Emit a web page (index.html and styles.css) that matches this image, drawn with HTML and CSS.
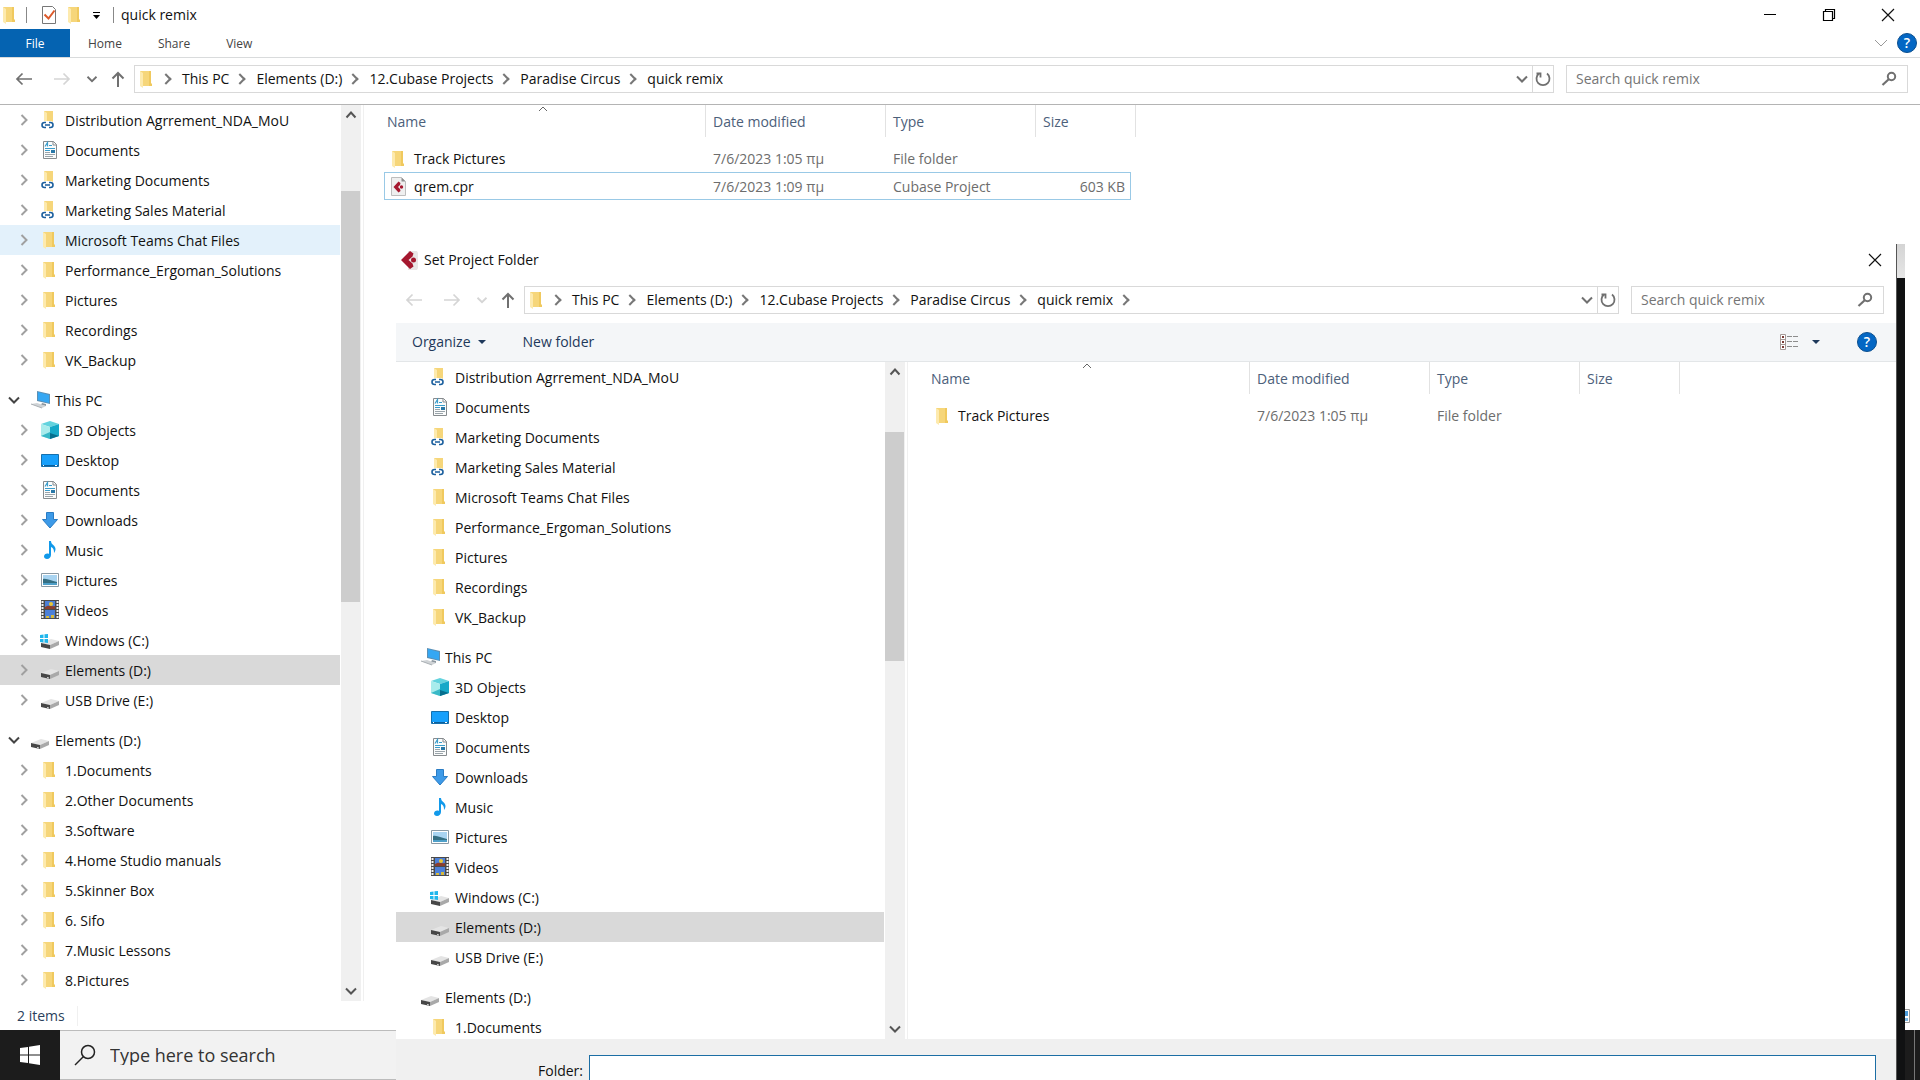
FILE: index.html
```html
<!DOCTYPE html>
<html lang="en">
<head>
    <meta charset="UTF-8">
    <meta name="viewport" content="width=device-width, initial-scale=1.0">
    <title>quick remix</title>
    <link rel="stylesheet" href="styles.css">
</head>
<body>

    <!-- Icon set -->
    <svg class="sprite" aria-hidden="true">
        <symbol id="i-folder" viewBox="0 0 20 20">
            <path d="M3 2h11v13l1 1v1H6L3 16z" fill="#f6d67a"/>
            <path d="M3 2l3 2v15l-3-2z" fill="#fdeaae"/>
            <path d="M12 2h2v12l1 1v2h-3z" fill="#f0c95e"/>
        </symbol>
        <symbol id="i-shared" viewBox="0 0 20 20">
            <path d="M4 1h9v15H4z" fill="#f6d67a"/>
            <path d="M4 1l3 2v14H4z" fill="#fdeaae"/>
            <rect x="1" y="11" width="13" height="8" rx="4" fill="#fff"/>
            <path d="M6 12.500H4.500a2.500 2.500 0 0 0 0 5H6M9 12.500h1.500a2.500 2.500 0 0 1 0 5H9M5 15h5" fill="none" stroke="#1b5f9e" stroke-width="1.600"/>
        </symbol>
        <symbol id="i-document" viewBox="0 0 20 20">
            <path d="M3.500 1.500h10l3 3v14h-13z" fill="#fbfcfc" stroke="#868b8e"/>
            <path d="M13 1.500V5h3.500" fill="none" stroke="#868b8e"/>
            <path d="M5 6.500l2.500-4v4M9 5.500h3M5 8.500h10M5 10.500h5" fill="none" stroke="#3a9ccb" stroke-width="1.200"/>
            <path d="M5 12.500h5M5 14.500h10M5 16.500h8" stroke="#9aa4aa"/>
            <path d="M11 10h4v3h-4z" fill="#2878a8"/>
        </symbol>
        <symbol id="i-pc" viewBox="0 0 20 20">
            <path d="M7 1l13 3v10L7 11z" fill="#5c8fb3"/>
            <path d="M8 2l11 3v8L8 10z" fill="#35a7f3"/>
            <path d="M12 13l4 1v2l-5-1z" fill="#8b969e"/>
            <path d="M1 14l6-1 9 3-4 2z" fill="#cfd3d6"/>
            <path d="M1 14l11 4" stroke="#aab0b4"/>
        </symbol>
        <symbol id="i-cube" viewBox="0 0 20 20">
            <path d="M10 1l9 3-9 3-9-3z" fill="#63d3de"/>
            <path d="M1 4l9 3v12l-9-3z" fill="#a9ecec"/>
            <path d="M10 7l9-3v12l-9 3z" fill="#16a9c8"/>
            <path d="M1 16l9-4v7z" fill="#39b9c7"/>
            <path d="M10 13l9 3-9 3z" fill="#066f8e"/>
        </symbol>
        <symbol id="i-desktop" viewBox="0 0 20 20">
            <path d="M1.500 4.500h17v12h-17z" fill="#18a0fb" stroke="#1670ad"/>
            <path d="M2 15.500h16" stroke="#0c5f9b"/>
            <path d="M3 15.500h1M15 15.500h2" stroke="#fff"/>
        </symbol>
        <symbol id="i-download" viewBox="0 0 20 20">
            <path d="M6.500 2.500h7v7h4L10 18 2.500 9.500h4z" fill="#3d9ae8" stroke="#2a7cc4"/>
        </symbol>
        <symbol id="i-music" viewBox="0 0 20 20">
            <path d="M9 1h2c0 4 4.500 4 4.500 8 0 1.500-.5 2.500-1.500 4 .3-3.500-1-5-3-6v8c0 2-1.700 4-4 4-1.700 0-3-1-3-2.500C4 14 7 13 9 14z" fill="#1199ea"/>
        </symbol>
        <symbol id="i-picture" viewBox="0 0 20 20">
            <path d="M1.500 3.500h17v13h-17z" fill="#fff" stroke="#8a9aa5"/>
            <path d="M3 5h14v10H3z" fill="#a9d4f1"/>
            <path d="M3 9c4-1 8 2 14 3v3H3z" fill="#356f83"/>
            <path d="M3 13h14v2H3z" fill="#4fa0c9"/>
        </symbol>
        <symbol id="i-video" viewBox="0 0 20 20">
            <path d="M1 0h18v19H1z" fill="#4a4a4a"/>
            <path d="M2.500 1v18M17.500 1v18" stroke="#f2f2f2" stroke-width="2" stroke-dasharray="2 1"/>
            <path d="M5 1h10v8H5zM5 10h10v8H5z" fill="#4c80d8"/>
            <path d="M5 7c4-3 7 0 10-1v3H5z" fill="#8a3d2e"/>
            <circle cx="11" cy="4" r="2" fill="#e8c736"/>
            <path d="M6 16h3v2H6zM11 15h3v3h-3z" fill="#d8b93a"/>
        </symbol>
        <symbol id="i-drive" viewBox="0 0 20 20">
            <path d="M1 13l10-4 8 2-9 4z" fill="#e4e4e4"/>
            <path d="M1 13l9 2v4l-9-2z" fill="#474747"/>
            <path d="M10 15l9-4v4l-9 4z" fill="#a9a9a9"/>
            <path d="M7 17.500l2 .5" stroke="#ddd"/>
        </symbol>
        <symbol id="i-drive-c" viewBox="0 0 20 20">
            <path d="M1 13l10-4 8 2-9 4z" fill="#e4e4e4"/>
            <path d="M1 13l9 2v4l-9-2z" fill="#474747"/>
            <path d="M10 15l9-4v4l-9 4z" fill="#a9a9a9"/>
            <path d="M0 5l3.500-.5V8H0zM4.500 4.300L8 4v4H4.500zM0 9h3.500v3.500L0 12zM4.500 9H8v4l-3.500-.4z" fill="#1fb6ec"/>
        </symbol>
        <symbol id="i-cubase" viewBox="0 0 20 20">
            <path d="M9 1h9l1 2v15l-1 2H9z" fill="#e9e6e6"/>
            <path d="M11 1l3.500 2.500-1 3L9.500 10l4 3.500 1 3L11 19 2 10z" fill="#a5182f"/>
            <circle cx="14.500" cy="10" r="2.500" fill="#a5182f"/>
        </symbol>
        <symbol id="i-cpr" viewBox="0 0 20 20">
            <path d="M2.500.5h10l4 4v14h-14z" fill="#efefef" stroke="#bdbdbd"/>
            <path d="M12.500.5v4h4z" fill="#8d8d8d"/>
            <path d="M9.500 4.500l2 1.500-.5 2-2 2 2 2 .5 2-2 1.500-5-5.500z" fill="#a5182f"/>
            <circle cx="12.500" cy="10" r="1.700" fill="#a5182f"/>
        </symbol>
        <symbol id="i-properties" viewBox="0 0 20 20">
            <path d="M3.500 1.500h10l3 3v14h-13z" fill="#fff" stroke="#777"/>
            <path d="M5.500 9.500l4 4 6-8" fill="none" stroke="#dc5a2b" stroke-width="2"/>
        </symbol>
        <symbol id="i-right" viewBox="0 0 20 20">
            <path d="M7.500 5l5 5-5 5" fill="none" stroke="currentColor" stroke-width="2"/>
        </symbol>
        <symbol id="i-down" viewBox="0 0 20 20">
            <path d="M5 7.500l5 5 5-5" fill="none" stroke="currentColor" stroke-width="2"/>
        </symbol>
        <symbol id="i-up" viewBox="0 0 20 20">
            <path d="M5.500 12.500l4.500-5 4.500 5" fill="none" stroke="currentColor" stroke-width="2"/>
        </symbol>
        <symbol id="i-thin-down" viewBox="0 0 20 20">
            <path d="M4 7l6 6 6-6" fill="none" stroke="currentColor"/>
        </symbol>
        <symbol id="i-arrow-left" viewBox="0 0 20 20">
            <path d="M18 10H3M8.500 4.500L3 10l5.500 5.500" fill="none" stroke="currentColor" stroke-width="1.700"/>
        </symbol>
        <symbol id="i-arrow-right" viewBox="0 0 20 20">
            <path d="M2 10h15M11.500 4.500L17 10l-5.500 5.500" fill="none" stroke="currentColor" stroke-width="1.700"/>
        </symbol>
        <symbol id="i-arrow-up" viewBox="0 0 20 20">
            <path d="M10 18V4M4.500 9.500L10 4l5.500 5.500" fill="none" stroke="currentColor" stroke-width="2"/>
        </symbol>
        <symbol id="i-refresh" viewBox="0 0 20 20">
            <path d="M14 4.500A6.500 6.500 0 1 1 6 4.500M3.500 4.500h4v4" fill="none" stroke="currentColor" stroke-width="1.800"/>
        </symbol>
        <symbol id="i-search" viewBox="0 0 20 20">
            <circle cx="12.500" cy="7.500" r="3.700" fill="none" stroke="currentColor" stroke-width="2"/>
            <path d="M10 10l-6.500 6" stroke="currentColor" stroke-width="2.200"/>
        </symbol>
        <symbol id="i-triangle" viewBox="0 0 10 10">
            <path d="M1 3h8L5 7z" fill="currentColor"/>
        </symbol>
        <symbol id="i-close" viewBox="0 0 20 20">
            <path d="M4 4l12 12M16 4L4 16" stroke="currentColor" stroke-width="1.200"/>
        </symbol>
    </svg>

    <!-- Explorer window -->
    <main class="explorer">
        <header class="titlebar">
            <svg class="icon"><use href="#i-folder"/></svg>
            <span class="divider"></span>
            <button class="tool" aria-label="Properties"><svg class="icon"><use href="#i-properties"/></svg></button>
            <button class="tool" aria-label="New folder"><svg class="icon"><use href="#i-folder"/></svg></button>
            <button class="tool" aria-label="Customize toolbar"><svg class="icon narrow" viewBox="5 0 10 20"><path d="M7 7.500h7" stroke="#000"/><path d="M7 10h7l-3.500 4z"/></svg></button>
            <span class="divider"></span>
            <span class="window-name">quick remix</span>
            <div class="window-buttons">
                <button aria-label="Minimize"><svg class="icon" viewBox="0 0 20 20"><path d="M4 9.500h12" stroke="#000"/></svg></button>
                <button aria-label="Restore"><svg class="icon" viewBox="0 0 20 20"><path d="M4.500 6.500h9v9h-9zM6.500 6V4.500h9v9H14" fill="none" stroke="#000" stroke-width="1.200"/></svg></button>
                <button aria-label="Close"><svg class="icon"><use href="#i-close"/></svg></button>
            </div>
        </header>

        <nav class="ribbon">
            <button class="tab file">File</button>
            <button class="tab">Home</button>
            <button class="tab">Share</button>
            <button class="tab">View</button>
            <button class="expand" aria-label="Expand the ribbon"><svg class="icon"><use href="#i-thin-down"/></svg></button>
            <button class="help" aria-label="Help">?</button>
        </nav>

        <div class="navbar">
            <button class="nav-back" aria-label="Back"><svg class="icon"><use href="#i-arrow-left"/></svg></button>
            <button class="nav-forward off" aria-label="Forward"><svg class="icon"><use href="#i-arrow-right"/></svg></button>
            <button class="nav-recent" aria-label="Recent locations"><svg class="icon small"><use href="#i-down"/></svg></button>
            <button class="nav-up" aria-label="Up"><svg class="icon"><use href="#i-arrow-up"/></svg></button>
            <div class="address">
                <svg class="icon"><use href="#i-folder"/></svg>
                <ol class="crumbs">
                    <li><a href="#">This PC</a></li>
                    <li><a href="#">Elements (D:)</a></li>
                    <li><a href="#">12.Cubase Projects</a></li>
                    <li><a href="#">Paradise Circus</a></li>
                    <li><a href="#">quick remix</a></li>
                </ol>
                <button aria-label="Previous locations"><svg class="icon"><use href="#i-down"/></svg></button>
                <button class="refresh" aria-label="Refresh"><svg class="icon"><use href="#i-refresh"/></svg></button>
            </div>
            <div class="search">
                <input type="text" placeholder="Search quick remix" aria-label="Search quick remix">
                <svg class="icon"><use href="#i-search"/></svg>
            </div>
        </div>

        <div class="panes">
            <ul class="tree">
                <li><button class="twist" aria-label="Expand"><svg class="icon"><use href="#i-right"/></svg></button><svg class="icon"><use href="#i-shared"/></svg><span>Distribution Agrrement_NDA_MoU</span></li>
                <li><button class="twist" aria-label="Expand"><svg class="icon"><use href="#i-right"/></svg></button><svg class="icon"><use href="#i-document"/></svg><span>Documents</span></li>
                <li><button class="twist" aria-label="Expand"><svg class="icon"><use href="#i-right"/></svg></button><svg class="icon"><use href="#i-shared"/></svg><span>Marketing Documents</span></li>
                <li><button class="twist" aria-label="Expand"><svg class="icon"><use href="#i-right"/></svg></button><svg class="icon"><use href="#i-shared"/></svg><span>Marketing Sales Material</span></li>
                <li class="hover"><button class="twist" aria-label="Expand"><svg class="icon"><use href="#i-right"/></svg></button><svg class="icon"><use href="#i-folder"/></svg><span>Microsoft Teams Chat Files</span></li>
                <li><button class="twist" aria-label="Expand"><svg class="icon"><use href="#i-right"/></svg></button><svg class="icon"><use href="#i-folder"/></svg><span>Performance_Ergoman_Solutions</span></li>
                <li><button class="twist" aria-label="Expand"><svg class="icon"><use href="#i-right"/></svg></button><svg class="icon"><use href="#i-folder"/></svg><span>Pictures</span></li>
                <li><button class="twist" aria-label="Expand"><svg class="icon"><use href="#i-right"/></svg></button><svg class="icon"><use href="#i-folder"/></svg><span>Recordings</span></li>
                <li><button class="twist" aria-label="Expand"><svg class="icon"><use href="#i-right"/></svg></button><svg class="icon"><use href="#i-folder"/></svg><span>VK_Backup</span></li>
                <li class="root"><button class="twist" aria-label="Collapse"><svg class="icon"><use href="#i-down"/></svg></button><svg class="icon"><use href="#i-pc"/></svg><span>This PC</span></li>
                <li><button class="twist" aria-label="Expand"><svg class="icon"><use href="#i-right"/></svg></button><svg class="icon"><use href="#i-cube"/></svg><span>3D Objects</span></li>
                <li><button class="twist" aria-label="Expand"><svg class="icon"><use href="#i-right"/></svg></button><svg class="icon"><use href="#i-desktop"/></svg><span>Desktop</span></li>
                <li><button class="twist" aria-label="Expand"><svg class="icon"><use href="#i-right"/></svg></button><svg class="icon"><use href="#i-document"/></svg><span>Documents</span></li>
                <li><button class="twist" aria-label="Expand"><svg class="icon"><use href="#i-right"/></svg></button><svg class="icon"><use href="#i-download"/></svg><span>Downloads</span></li>
                <li><button class="twist" aria-label="Expand"><svg class="icon"><use href="#i-right"/></svg></button><svg class="icon"><use href="#i-music"/></svg><span>Music</span></li>
                <li><button class="twist" aria-label="Expand"><svg class="icon"><use href="#i-right"/></svg></button><svg class="icon"><use href="#i-picture"/></svg><span>Pictures</span></li>
                <li><button class="twist" aria-label="Expand"><svg class="icon"><use href="#i-right"/></svg></button><svg class="icon"><use href="#i-video"/></svg><span>Videos</span></li>
                <li><button class="twist" aria-label="Expand"><svg class="icon"><use href="#i-right"/></svg></button><svg class="icon"><use href="#i-drive-c"/></svg><span>Windows (C:)</span></li>
                <li class="selected"><button class="twist" aria-label="Expand"><svg class="icon"><use href="#i-right"/></svg></button><svg class="icon"><use href="#i-drive"/></svg><span>Elements (D:)</span></li>
                <li><button class="twist" aria-label="Expand"><svg class="icon"><use href="#i-right"/></svg></button><svg class="icon"><use href="#i-drive"/></svg><span>USB Drive (E:)</span></li>
                <li class="root"><button class="twist" aria-label="Collapse"><svg class="icon"><use href="#i-down"/></svg></button><svg class="icon"><use href="#i-drive"/></svg><span>Elements (D:)</span></li>
                <li><button class="twist" aria-label="Expand"><svg class="icon"><use href="#i-right"/></svg></button><svg class="icon"><use href="#i-folder"/></svg><span>1.Documents</span></li>
                <li><button class="twist" aria-label="Expand"><svg class="icon"><use href="#i-right"/></svg></button><svg class="icon"><use href="#i-folder"/></svg><span>2.Other Documents</span></li>
                <li><button class="twist" aria-label="Expand"><svg class="icon"><use href="#i-right"/></svg></button><svg class="icon"><use href="#i-folder"/></svg><span>3.Software</span></li>
                <li><button class="twist" aria-label="Expand"><svg class="icon"><use href="#i-right"/></svg></button><svg class="icon"><use href="#i-folder"/></svg><span>4.Home Studio manuals</span></li>
                <li><button class="twist" aria-label="Expand"><svg class="icon"><use href="#i-right"/></svg></button><svg class="icon"><use href="#i-folder"/></svg><span>5.Skinner Box</span></li>
                <li><button class="twist" aria-label="Expand"><svg class="icon"><use href="#i-right"/></svg></button><svg class="icon"><use href="#i-folder"/></svg><span>6. Sifo</span></li>
                <li><button class="twist" aria-label="Expand"><svg class="icon"><use href="#i-right"/></svg></button><svg class="icon"><use href="#i-folder"/></svg><span>7.Music Lessons</span></li>
                <li><button class="twist" aria-label="Expand"><svg class="icon"><use href="#i-right"/></svg></button><svg class="icon"><use href="#i-folder"/></svg><span>8.Pictures</span></li>
            </ul>
            <div class="scrollbar">
                <button aria-label="Scroll up"><svg class="icon"><use href="#i-up"/></svg></button>
                <div class="track"><div class="thumb"></div></div>
                <button aria-label="Scroll down"><svg class="icon"><use href="#i-down"/></svg></button>
            </div>
            <section class="files">
                <table>
                    <colgroup><col class="c-name"><col class="c-date"><col class="c-type"><col class="c-size"><col class="c-end"></colgroup>
                    <thead>
                        <tr>
                            <th>Name<svg class="sort" viewBox="0 0 10 6"><path d="M1 5l4-4 4 4" fill="none" stroke="#666"/></svg></th>
                            <th>Date modified</th>
                            <th>Type</th>
                            <th colspan="2">Size</th>
                        </tr>
                    </thead>
                    <tbody>
                        <tr>
                            <td><div class="file-name"><svg class="icon"><use href="#i-folder"/></svg>Track Pictures</div></td>
                            <td>7/6/2023 1:05 πμ</td>
                            <td>File folder</td>
                            <td class="size"></td>
                        </tr>
                        <tr class="focused">
                            <td><div class="file-name"><svg class="icon"><use href="#i-cpr"/></svg>qrem.cpr</div></td>
                            <td>7/6/2023 1:09 πμ</td>
                            <td>Cubase Project</td>
                            <td class="size">603 KB</td>
                        </tr>
                    </tbody>
                </table>
            </section>
        </div>

        <footer class="statusbar">
            <span class="count">2 items</span>
            <button aria-label="Large icons"><svg class="icon" viewBox="0 0 20 20"><path d="M1.500 3.500h17v13h-17z" fill="#fff" stroke="#999"/><path d="M4 5h13v5H4z" fill="#4d9ddb"/><path d="M4 12h13v3H4z" fill="#7fb9e4"/></svg></button>
        </footer>
    </main>

    <!-- Taskbar -->
    <footer class="taskbar">
        <button class="start" aria-label="Start"><svg class="icon" viewBox="0 0 20 20"><path d="M0 3l8-1v7.500H0zM9 1.800L20 0v9.500H9zM0 10.500h8V18l-8-1zM9 10.500h11V20L9 18.200z" fill="#fff"/></svg></button>
        <label class="task-search">
            <svg class="lens" viewBox="0 0 22 22"><circle cx="14" cy="8" r="6.500" fill="none" stroke="#222" stroke-width="1.500"/><path d="M9.500 12.500L1 21" stroke="#222" stroke-width="1.500"/></svg>
            <input type="text" placeholder="Type here to search" aria-label="Type here to search">
        </label>
        <button class="show-desktop" aria-label="Show desktop"></button>
    </footer>

    <!-- Set Project Folder dialog -->
    <div class="dialog" role="dialog" aria-label="Set Project Folder">
        <div class="dialog-window">
            <header class="dialog-title">
                <svg class="icon"><use href="#i-cubase"/></svg>
                <span>Set Project Folder</span>
                <button aria-label="Close"><svg class="icon"><use href="#i-close"/></svg></button>
            </header>

            <div class="navbar">
                <button class="nav-back off" aria-label="Back"><svg class="icon"><use href="#i-arrow-left"/></svg></button>
                <button class="nav-forward off" aria-label="Forward"><svg class="icon"><use href="#i-arrow-right"/></svg></button>
                <button class="nav-recent off" aria-label="Recent locations"><svg class="icon small"><use href="#i-down"/></svg></button>
                <button class="nav-up" aria-label="Up"><svg class="icon"><use href="#i-arrow-up"/></svg></button>
                <div class="address">
                    <svg class="icon"><use href="#i-folder"/></svg>
                    <ol class="crumbs open">
                        <li><a href="#">This PC</a></li>
                        <li><a href="#">Elements (D:)</a></li>
                        <li><a href="#">12.Cubase Projects</a></li>
                        <li><a href="#">Paradise Circus</a></li>
                        <li><a href="#">quick remix</a></li>
                    </ol>
                    <button aria-label="Previous locations"><svg class="icon"><use href="#i-down"/></svg></button>
                    <button class="refresh" aria-label="Refresh"><svg class="icon"><use href="#i-refresh"/></svg></button>
                </div>
                <div class="search">
                    <input type="text" placeholder="Search quick remix" aria-label="Search quick remix">
                    <svg class="icon"><use href="#i-search"/></svg>
                </div>
            </div>

            <div class="commands">
                <button>Organize <svg class="caret"><use href="#i-triangle"/></svg></button>
                <button>New folder</button>
                <button class="view" aria-label="Change your view">
                    <svg class="icon" viewBox="0 0 20 20"><path d="M1.500 2.500h5v15h-5zM1.500 7.500h5M1.500 12.500h5" fill="#fff" stroke="#a59a98"/><path d="M3 5h2M3 10h2M3 15h2" stroke="#7a3b36" stroke-width="2"/><path d="M8 4.500h5M14 4.500h5M8 9.500h5M14 9.500h5M8 14.500h5M14 14.500h5" stroke="#8d8d8d"/></svg>
                </button>
                <button class="more" aria-label="More options"><svg class="caret"><use href="#i-triangle"/></svg></button>
                <button class="help" aria-label="Help">?</button>
            </div>

            <div class="panes">
                <ul class="tree">
                    <li><svg class="icon"><use href="#i-shared"/></svg><span>Distribution Agrrement_NDA_MoU</span></li>
                    <li><svg class="icon"><use href="#i-document"/></svg><span>Documents</span></li>
                    <li><svg class="icon"><use href="#i-shared"/></svg><span>Marketing Documents</span></li>
                    <li><svg class="icon"><use href="#i-shared"/></svg><span>Marketing Sales Material</span></li>
                    <li><svg class="icon"><use href="#i-folder"/></svg><span>Microsoft Teams Chat Files</span></li>
                    <li><svg class="icon"><use href="#i-folder"/></svg><span>Performance_Ergoman_Solutions</span></li>
                    <li><svg class="icon"><use href="#i-folder"/></svg><span>Pictures</span></li>
                    <li><svg class="icon"><use href="#i-folder"/></svg><span>Recordings</span></li>
                    <li><svg class="icon"><use href="#i-folder"/></svg><span>VK_Backup</span></li>
                    <li class="root"><svg class="icon"><use href="#i-pc"/></svg><span>This PC</span></li>
                    <li><svg class="icon"><use href="#i-cube"/></svg><span>3D Objects</span></li>
                    <li><svg class="icon"><use href="#i-desktop"/></svg><span>Desktop</span></li>
                    <li><svg class="icon"><use href="#i-document"/></svg><span>Documents</span></li>
                    <li><svg class="icon"><use href="#i-download"/></svg><span>Downloads</span></li>
                    <li><svg class="icon"><use href="#i-music"/></svg><span>Music</span></li>
                    <li><svg class="icon"><use href="#i-picture"/></svg><span>Pictures</span></li>
                    <li><svg class="icon"><use href="#i-video"/></svg><span>Videos</span></li>
                    <li><svg class="icon"><use href="#i-drive-c"/></svg><span>Windows (C:)</span></li>
                    <li class="selected"><svg class="icon"><use href="#i-drive"/></svg><span>Elements (D:)</span></li>
                    <li><svg class="icon"><use href="#i-drive"/></svg><span>USB Drive (E:)</span></li>
                    <li class="root"><svg class="icon"><use href="#i-drive"/></svg><span>Elements (D:)</span></li>
                    <li><svg class="icon"><use href="#i-folder"/></svg><span>1.Documents</span></li>
                </ul>
                <div class="scrollbar">
                    <button aria-label="Scroll up"><svg class="icon"><use href="#i-up"/></svg></button>
                    <div class="track"><div class="thumb"></div></div>
                    <button aria-label="Scroll down"><svg class="icon"><use href="#i-down"/></svg></button>
                </div>
                <section class="files">
                    <table>
                        <colgroup><col class="c-name"><col class="c-date"><col class="c-type"><col class="c-size"><col class="c-end"></colgroup>
                        <thead>
                            <tr>
                                <th>Name<svg class="sort" viewBox="0 0 10 6"><path d="M1 5l4-4 4 4" fill="none" stroke="#666"/></svg></th>
                                <th>Date modified</th>
                                <th>Type</th>
                                <th colspan="2">Size</th>
                            </tr>
                        </thead>
                        <tbody>
                            <tr>
                                <td><div class="file-name"><svg class="icon"><use href="#i-folder"/></svg>Track Pictures</div></td>
                                <td>7/6/2023 1:05 πμ</td>
                                <td>File folder</td>
                                <td class="size"></td>
                            </tr>
                        </tbody>
                    </table>
                </section>
            </div>

            <div class="folder-row">
                <label for="folder">Folder:</label>
                <input type="text" id="folder">
            </div>
        </div>
        <div class="dialog-edge"></div>
    </div>

</body>
</html>
```
FILE: styles.css
```css
/* Global Styles */
* {
    box-sizing: border-box;
}

body {
    margin: 0;
    height: 100vh;
    overflow: hidden;
    display: flex;
    flex-direction: column;
    position: relative;
    background: #fff;
    color: #111;
    font-family: "Open Sans", "Noto Sans", sans-serif;
    font-size: 14px;
    line-height: 20px;
}

button, input {
    font: inherit;
    color: inherit;
    background: none;
    border: none;
    padding: 0;
    outline: none;
}

button {
    display: flex;
    align-items: center;
    justify-content: center;
}

a {
    color: inherit;
    text-decoration: none;
}

ul, ol {
    list-style: none;
    margin: 0;
    padding: 0;
}

.sprite {
    display: none;
}

.icon {
    width: 20px;
    height: 20px;
    flex: none;
    display: block;
}

.icon.small {
    width: 18px;
}

.icon.narrow {
    width: 10px;
}

.caret {
    width: 10px;
    height: 10px;
}

.help {
    width: 20px;
    height: 20px;
    border-radius: 50%;
    border: 1px solid #0b4f8f;
    background: #0467c4;
    color: #fff;
    font-weight: 600;
}

/* Explorer */
.explorer {
    flex: 1;
    min-height: 0;
    display: flex;
    flex-direction: column;
}

.titlebar {
    height: 29px;
    flex: none;
    display: flex;
    align-items: center;
}

.divider {
    width: 1px;
    height: 16px;
    margin: 0 12px 0 6px;
    background: #888;
}

.tool {
    margin-right: 6px;
}

.window-name {
    margin-left: -5px;
}

.window-buttons {
    margin-left: auto;
    margin-right: 22px;
    display: flex;
    gap: 39px;
}

/* Ribbon */
.ribbon {
    height: 29px;
    flex: none;
    display: flex;
    align-items: center;
    padding-right: 3px;
    border-bottom: 1px solid #d9dbdc;
}

.tab {
    height: 28px;
    padding: 2px 18px 0;
    font-size: 12px;
    color: #444;
}

.tab.file {
    width: 70px;
    background: #0563b1;
    color: #fff;
}

.expand {
    margin-left: auto;
    margin-right: 6px;
    color: #999;
}

/* Navigation bar */
.navbar {
    height: 47px;
    flex: none;
    display: flex;
    align-items: center;
    padding: 0 12px 0 8px;
}

.explorer .navbar {
    padding: 0 12px 4px 14px;
    border-bottom: 1px solid #b4b4b4;
}

.navbar button {
    width: 20px;
    color: #707070;
}

.navbar .off {
    color: #d5d5d5;
}

.nav-back {
    margin-right: 18px;
}

.nav-forward {
    margin-right: 10px;
}

.nav-recent, .nav-up {
    margin-right: 6px;
}

.address {
    flex: 1;
    height: 28px;
    display: flex;
    align-items: center;
    padding-left: 2px;
    border: 1px solid #d9d9d9;
}

.crumbs {
    flex: 1;
    display: flex;
    align-items: center;
    margin-left: -2px;
}

.crumbs li {
    display: flex;
    align-items: center;
}

.crumbs li::before, .crumbs.open::after {
    content: "";
    width: 6px;
    height: 6px;
    margin: 0 12px 0 7px;
    border: solid #777;
    border-width: 2px 2px 0 0;
    transform: rotate(45deg);
}

.address .refresh {
    width: 21px;
    height: 26px;
    border-left: 1px solid #d9d9d9;
}

.search {
    width: 342px;
    height: 28px;
    margin-left: 12px;
    padding: 0 8px 0 9px;
    display: flex;
    align-items: center;
    border: 1px solid #d9d9d9;
    color: #707070;
}

.dialog .search {
    width: 253px;
}

.search input {
    flex: 1;
    min-width: 0;
}

.search input::placeholder {
    color: #757575;
    opacity: 1;
}

/* Tree and file list */
.panes {
    flex: 1;
    min-height: 0;
    display: flex;
}

.tree {
    width: 340px;
    flex: none;
    overflow: hidden;
}

.tree li {
    height: 30px;
    display: flex;
    align-items: center;
    padding-left: 14px;
    white-space: nowrap;
}

.tree li.root {
    margin-top: 10px;
    padding-left: 4px;
}

.tree span {
    margin-left: 5px;
    padding-top: 2px;
}

.tree .hover {
    background: #e3f1fb;
}

.tree .selected {
    background: #d9d9d9;
}

.twist {
    margin-right: 6px;
    color: #a0a0a0;
}

.root .twist {
    color: #444;
}

.scrollbar {
    width: 20px;
    margin: 0 2px 0 1px;
    padding-right: 1px;
    flex: none;
    display: flex;
    flex-direction: column;
    background: #f0f0f0;
    color: #555;
}

.track {
    flex: 1;
    display: flex;
    flex-direction: column;
}

.track::before {
    content: "";
    flex: 66;
}

.track::after {
    content: "";
    flex: 379;
}

.thumb {
    flex: 411;
    background: #cdcdcd;
}

.files {
    flex: 1;
    min-width: 0;
    padding-left: 20px;
    border-left: 1px solid #f0f0f0;
}

table {
    width: 752px;
    table-layout: fixed;
    border-spacing: 0;
}

.c-name {
    width: 322px;
}

.c-date {
    width: 180px;
}

.c-type {
    width: 150px;
}

.c-size {
    width: 95px;
}

.c-end {
    width: 5px;
}

th {
    position: relative;
    height: 32px;
    padding: 2px 7px 0;
    border-right: 1px solid #e2e2e2;
    font-weight: 400;
    text-align: left;
    color: #4c607a;
}

th:first-child {
    padding-left: 3px;
}

.sort {
    position: absolute;
    top: 1px;
    left: 154px;
    width: 10px;
    height: 6px;
}

tbody::before {
    content: "";
    display: block;
    height: 7px;
}

td {
    height: 28px;
    padding: 2px 7px 0;
    border: 0 solid #99c9e6;
    color: #6d6d6d;
}

td:first-child {
    padding-left: 5px;
    color: #111;
}

td.size {
    padding-right: 5px;
    text-align: right;
}

.focused td {
    border-width: 1px 0;
}

.focused td:first-child {
    padding-left: 4px;
    border-left-width: 1px;
}

.focused td:last-child {
    border-right-width: 1px;
}

.file-name {
    display: flex;
    align-items: center;
    gap: 5px;
}

/* Status bar */
.statusbar {
    height: 29px;
    flex: none;
    display: flex;
    align-items: center;
    justify-content: space-between;
    padding: 0 9px 0 17px;
    color: #2b3f5c;
}

.count {
    padding-right: 12px;
    border-right: 1px solid #f0f0f0;
}

/* Taskbar */
.taskbar {
    height: 50px;
    flex: none;
    display: flex;
    background: #1c1c1c;
}

.start {
    width: 60px;
}

.task-search {
    width: 430px;
    display: flex;
    align-items: center;
    padding-left: 14px;
    background: #f2f2f2;
    border: solid #bcbcbc;
    border-width: 1px 0;
}

.lens {
    width: 22px;
    height: 22px;
}

.task-search input {
    flex: 1;
    margin-left: 14px;
    font-size: 18px;
}

.task-search input::placeholder {
    color: #333;
    opacity: 1;
}

.show-desktop {
    width: 6px;
    margin-left: auto;
    border-left: 1px solid #777;
}

/* Dialog over the explorer */
.dialog {
    position: absolute;
    top: 244px;
    right: 15px;
    bottom: 0;
    left: 396px;
    display: flex;
}

.dialog-window {
    flex: 1;
    min-width: 0;
    display: flex;
    flex-direction: column;
    background: #fff;
}

.dialog-edge {
    width: 9px;
    border-left: 1px solid #555;
    background: linear-gradient(#d4d4d4, #e6e6e6) top / 100% 34px no-repeat #101112;
}

.dialog-title {
    height: 32px;
    flex: none;
    display: flex;
    align-items: center;
    gap: 5px;
    padding: 0 11px 0 3px;
}

.dialog-title button {
    margin-left: auto;
}

.commands {
    height: 39px;
    flex: none;
    display: flex;
    align-items: center;
    padding: 0 19px 0 16px;
    background: #f4f6f8;
    border-bottom: 1px solid #e3e6e8;
    color: #1e395b;
}

.commands button {
    margin-right: 36px;
    gap: 6px;
}

.commands .view {
    margin: 0 12px 0 auto;
}

.commands .help {
    margin-right: 0;
}

.dialog .tree {
    width: 488px;
}

.dialog .tree li {
    padding-left: 34px;
}

.dialog .tree li.root {
    padding-left: 24px;
}

.dialog .track::before {
    flex: 50;
}

.dialog .thumb {
    flex: 229;
}

.dialog .track::after {
    flex: 358;
}

/* Folder field */
.folder-row {
    height: 41px;
    flex: none;
    overflow: hidden;
    display: flex;
    padding: 16px 20px 0 0;
    background: #f0f0f0;
}

.folder-row label {
    width: 187px;
    margin-right: 6px;
    text-align: right;
    line-height: 32px;
}

.folder-row input {
    flex: 1;
    height: 32px;
    padding: 0 6px;
    background: #fff;
    border: 1px solid #1c6ea4;
}
```
